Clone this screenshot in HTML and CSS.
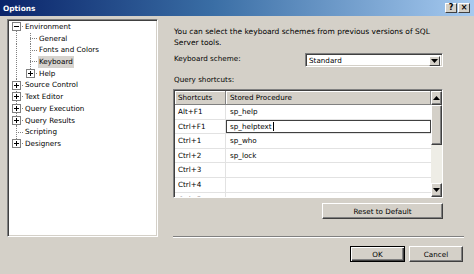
FILE: index.html
```html
<!doctype html>

<html>
    <head>
        <meta charset="utf-8">
        <title>Options</title>
        <link rel="stylesheet" href="styles.css">
    </head>

    <body>
        <div class="window">
            <div class="titlebar">
                <span class="title">Options</span>
                <div class="title-buttons">
                    <span class="cap-btn">?</span>
                    <span class="cap-btn">&#215;</span>
                </div>
            </div>

            <div class="body">
                <div class="tree">
                    <div class="row">
                        <span class="cell c-first"><svg width="9" height="9" viewBox="0 0 9 9"><rect x="0.5" y="0.5" width="8" height="8" fill="#fff" stroke="#808080"/><path d="M2 4.5h5" stroke="#000"/></svg></span>
                        <span class="label">Environment</span>
                    </div>
                    <div class="row">
                        <span class="cell c-v"></span><span class="cell c-t"></span>
                        <span class="label">General</span>
                    </div>
                    <div class="row">
                        <span class="cell c-v"></span><span class="cell c-t"></span>
                        <span class="label">Fonts and Colors</span>
                    </div>
                    <div class="row">
                        <span class="cell c-v"></span><span class="cell c-t"></span>
                        <span class="label selected">Keyboard</span>
                    </div>
                    <div class="row">
                        <span class="cell c-v"></span><span class="cell c-last"><svg width="9" height="9" viewBox="0 0 9 9"><rect x="0.5" y="0.5" width="8" height="8" fill="#fff" stroke="#808080"/><path d="M2 4.5h5M4.5 2v5" stroke="#000"/></svg></span>
                        <span class="label">Help</span>
                    </div>
                    <div class="row">
                        <span class="cell c-mid"><svg width="9" height="9" viewBox="0 0 9 9"><rect x="0.5" y="0.5" width="8" height="8" fill="#fff" stroke="#808080"/><path d="M2 4.5h5M4.5 2v5" stroke="#000"/></svg></span>
                        <span class="label">Source Control</span>
                    </div>
                    <div class="row">
                        <span class="cell c-mid"><svg width="9" height="9" viewBox="0 0 9 9"><rect x="0.5" y="0.5" width="8" height="8" fill="#fff" stroke="#808080"/><path d="M2 4.5h5M4.5 2v5" stroke="#000"/></svg></span>
                        <span class="label">Text Editor</span>
                    </div>
                    <div class="row">
                        <span class="cell c-mid"><svg width="9" height="9" viewBox="0 0 9 9"><rect x="0.5" y="0.5" width="8" height="8" fill="#fff" stroke="#808080"/><path d="M2 4.5h5M4.5 2v5" stroke="#000"/></svg></span>
                        <span class="label">Query Execution</span>
                    </div>
                    <div class="row">
                        <span class="cell c-mid"><svg width="9" height="9" viewBox="0 0 9 9"><rect x="0.5" y="0.5" width="8" height="8" fill="#fff" stroke="#808080"/><path d="M2 4.5h5M4.5 2v5" stroke="#000"/></svg></span>
                        <span class="label">Query Results</span>
                    </div>
                    <div class="row">
                        <span class="cell c-t"></span>
                        <span class="label">Scripting</span>
                    </div>
                    <div class="row">
                        <span class="cell c-last"><svg width="9" height="9" viewBox="0 0 9 9"><rect x="0.5" y="0.5" width="8" height="8" fill="#fff" stroke="#808080"/><path d="M2 4.5h5M4.5 2v5" stroke="#000"/></svg></span>
                        <span class="label">Designers</span>
                    </div>
                </div>

                <div class="page">
                    <p class="intro">You can select the keyboard schemes from previous versions of SQL<br>Server tools.</p>

                    <div class="scheme-row">
                        <span class="scheme-label">Keyboard scheme:</span>
                        <div class="combo">
                            <span class="combo-text">Standard</span>
                            <span class="combo-btn"><svg width="7" height="4" viewBox="0 0 7 4"><path d="M0 0h7L3.5 4z" fill="#000"/></svg></span>
                        </div>
                    </div>

                    <div class="query-label">Query shortcuts:</div>

                    <div class="grid">
                        <div class="grid-in">
                            <div class="grid-row head">
                                <span class="col1">Shortcuts</span>
                                <span class="col2">Stored Procedure</span>
                            </div>
                            <div class="grid-row">
                                <span class="col1">Alt+F1</span>
                                <span class="col2">sp_help</span>
                            </div>
                            <div class="grid-row">
                                <span class="col1">Ctrl+F1</span>
                                <span class="col2 editing">sp_helptext<span class="caret"></span></span>
                            </div>
                            <div class="grid-row">
                                <span class="col1">Ctrl+1</span>
                                <span class="col2">sp_who</span>
                            </div>
                            <div class="grid-row">
                                <span class="col1">Ctrl+2</span>
                                <span class="col2">sp_lock</span>
                            </div>
                            <div class="grid-row">
                                <span class="col1">Ctrl+3</span>
                                <span class="col2"></span>
                            </div>
                            <div class="grid-row">
                                <span class="col1">Ctrl+4</span>
                                <span class="col2"></span>
                            </div>
                            <div class="grid-row">
                                <span class="col1">Ctrl+5</span>
                                <span class="col2"></span>
                            </div>
                        </div>
                        <div class="scrollbar">
                            <span class="sb-btn"><svg width="7" height="4" viewBox="0 0 7 4"><path d="M3.5 0L7 4H0z" fill="#000"/></svg></span>
                            <span class="sb-thumb"></span>
                            <span class="sb-track"></span>
                            <span class="sb-btn"><svg width="7" height="4" viewBox="0 0 7 4"><path d="M0 0h7L3.5 4z" fill="#000"/></svg></span>
                        </div>
                    </div>

                    <div class="reset-area">
                        <button class="btn reset">Reset to Default</button>
                    </div>

                    <div class="separator"></div>
                </div>
            </div>

            <div class="footer">
                <button class="btn default">OK</button>
                <button class="btn">Cancel</button>
            </div>
        </div>
    </body>
</html>
```

FILE: styles.css
```css
*{
    margin: 0px;
    padding: 0px;
    box-sizing: border-box;
}
:root{
    --dv: repeating-linear-gradient(to bottom, #808080 0px 1px, transparent 1px 2px);
    --dh: repeating-linear-gradient(to right, #808080 0px 1px, transparent 1px 2px);
}
body{
    width: 474px;
    height: 274px;
    overflow: hidden;
    background-color: #d4d0c8;
    font-family: "DejaVu Sans", sans-serif;
    font-size: 7.2px;
    color: #000000;
}
.window{
    width: 100%;
    height: 100%;
}
.titlebar{
    height: 16px;
    display: flex;
    align-items: center;
    justify-content: space-between;
    padding: 0px 4px 0px 3px;
    background: linear-gradient(to right, #0a246a 0%, #3a6ea5 45%, #a6caf0 100%);
}
.title{
    color: white;
    font-weight: bold;
    font-size: 7.4px;
}
.title-buttons{
    display: flex;
    gap: 1px;
}
.cap-btn{
    width: 12px;
    height: 10px;
    display: flex;
    justify-content: center;
    align-items: center;
    font-size: 8px;
    font-weight: bold;
    line-height: 10px;
    background-color: #d4d0c8;
    border: 1px solid;
    border-color: #ffffff #404040 #404040 #ffffff;
}
.body{
    display: flex;
    align-items: flex-start;
    padding: 3px 0px 0px 7px;
}
.tree{
    width: 151px;
    height: 218px;
    background-color: white;
    border: 1px solid;
    border-color: #808080 #ffffff #ffffff #808080;
    box-shadow: inset 1px 1px #404040, inset -1px -1px #d4d0c8;
    padding: 1px 0px 0px 2px;
}
.row{
    height: 11.7px;
    display: flex;
    align-items: center;
}
.cell{
    width: 14px;
    height: 100%;
    display: flex;
    align-items: center;
    padding-left: 2px;
}
.c-v{
    background: var(--dv) 6px 0px / 1px 100% no-repeat;
}
.c-t{
    background: var(--dv) 6px 0px / 1px 100% no-repeat, var(--dh) right center / 8px 1px no-repeat;
}
.c-first{
    background: var(--dv) 6px 100% / 1px 50% no-repeat, var(--dh) right center / 8px 1px no-repeat;
}
.c-mid{
    background: var(--dv) 6px 0px / 1px 100% no-repeat, var(--dh) right center / 8px 1px no-repeat;
}
.c-last{
    background: var(--dv) 6px 0px / 1px 50% no-repeat, var(--dh) right center / 8px 1px no-repeat;
}
.label{
    line-height: 11.7px;
    padding: 0px 1px;
    white-space: nowrap;
}
.selected{
    background-color: #d6d3ce;
}
.page{
    width: 291px;
    margin-left: 15px;
    padding-top: 7px;
    display: flex;
    flex-direction: column;
}
.intro{
    font-size: 7.5px;
    line-height: 11px;
    margin-left: 1px;
}
.scheme-row{
    width: 270px;
    margin-top: 5px;
    display: flex;
    align-items: flex-start;
}
.scheme-label{
    line-height: 11px;
    margin-left: 1px;
}
.combo{
    width: 138px;
    height: 14px;
    margin-left: auto;
    display: flex;
    background-color: white;
    border: 1px solid;
    border-color: #808080 #ffffff #ffffff #808080;
    box-shadow: inset 1px 1px #404040, inset -1px -1px #d4d0c8;
    padding: 2px 2px 2px 3px;
}
.combo-text{
    flex: 1;
    line-height: 10px;
}
.combo-btn{
    width: 11px;
    height: 10px;
    display: flex;
    justify-content: center;
    align-items: center;
    background-color: #d4d0c8;
    border: 1px solid;
    border-color: #ffffff #404040 #404040 #ffffff;
}
.query-label{
    line-height: 11px;
    margin-top: 7px;
    margin-left: 1px;
}
.grid{
    width: 270px;
    height: 109px;
    margin-top: 4px;
    display: flex;
    overflow: hidden;
    background-color: white;
    border: 1px solid;
    border-color: #808080 #ffffff #ffffff #808080;
    box-shadow: inset 1px 1px #404040;
    padding: 1px 0px 0px 1px;
}
.grid-in{
    flex: 1;
    overflow: hidden;
}
.grid-row{
    height: 14.6px;
    display: flex;
    border-bottom: 1px solid #e2e2e2;
}
.grid-row span{
    line-height: 13.6px;
    white-space: nowrap;
}
.col1{
    width: 51px;
    padding-left: 3px;
    border-right: 1px solid #e2e2e2;
}
.col2{
    flex: 1;
    padding-left: 4px;
}
.head{
    height: 14px;
    border-bottom: none;
}
.head span{
    background-color: #d4d0c8;
    border-right: 1px solid #808080;
    border-bottom: 1px solid #808080;
    box-shadow: inset 1px 1px #ffffff;
    line-height: 13px;
}
.head .col1{
    border-right: 1px solid #808080;
}
.editing{
    border: 1px solid #404040;
    padding-left: 3px;
    display: flex;
    align-items: center;
}
.grid-row .caret{
    width: 1px;
    height: 9px;
    margin-left: 1px;
    background-color: #000000;
}
.scrollbar{
    width: 11px;
    display: flex;
    flex-direction: column;
    background-color: #eeede6;
}
.sb-btn{
    height: 14px;
    display: flex;
    justify-content: center;
    align-items: center;
    background-color: #d4d0c8;
    border: 1px solid;
    border-color: #ffffff #404040 #404040 #ffffff;
    box-shadow: inset -1px -1px #808080;
}
.sb-thumb{
    height: 40px;
    background-color: #d4d0c8;
    border: 1px solid;
    border-color: #ffffff #404040 #404040 #ffffff;
    box-shadow: inset -1px -1px #808080;
}
.sb-track{
    flex: 1;
}
.reset-area{
    width: 270px;
    margin-top: 5px;
    display: flex;
    justify-content: flex-end;
}
.btn{
    height: 16px;
    font-family: "DejaVu Sans", sans-serif;
    font-size: 7.2px;
    color: #000000;
    background-color: #d4d0c8;
    border: 1px solid;
    border-color: #ffffff #404040 #404040 #ffffff;
    box-shadow: inset -1px -1px #808080;
}
.reset{
    width: 121px;
}
.separator{
    margin-top: 17px;
    height: 2px;
    border-top: 1px solid #808080;
    border-bottom: 1px solid #ffffff;
}
.footer{
    display: flex;
    justify-content: flex-end;
    gap: 4px;
    padding-right: 11px;
    margin-top: 8px;
}
.footer .btn{
    width: 54px;
}
.footer .default{
    width: 55px;
    border: 1px solid #000000;
    box-shadow: inset 1px 1px #ffffff, inset -1px -1px #404040, inset -2px -2px #808080;
}
```
